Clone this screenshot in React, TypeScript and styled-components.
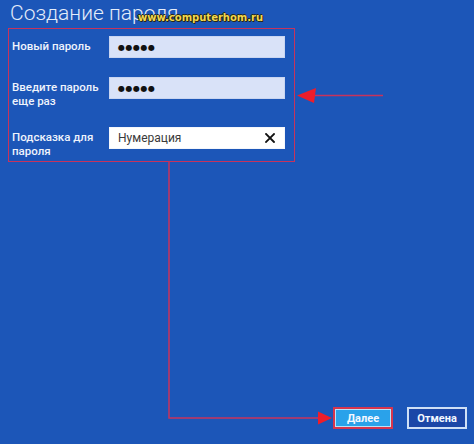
import React from 'react'
import styled, { createGlobalStyle } from 'styled-components'

const GlobalStyle = createGlobalStyle`
  html, body {
    margin: 0;
    padding: 0;
    background: #1c56b8;
  }
  * {
    box-sizing: border-box;
  }
`

const Page = styled.div`
  position: relative;
  width: 474px;
  height: 444px;
  display: flex;
  flex-direction: column;
  background: #1c56b8;
  font-family: Roboto, 'Noto Sans', sans-serif;
  overflow: hidden;
`

const Header = styled.div`
  position: relative;
  height: 28px;
  padding: 1px 0 0 10px;
`

const Title = styled.h1`
  margin: 0;
  font-size: 21px;
  line-height: 24px;
  font-weight: 300;
  color: #e4ecfa;
`

// watermark stamped over the screenshot
const Watermark = styled.span`
  position: absolute;
  left: 138px;
  top: 12px;
  font-family: 'DejaVu Sans', sans-serif;
  font-weight: 700;
  font-size: 10px;
  line-height: 12px;
  color: #f3d84c;
  text-shadow: 0 0 1px #1a1a10, 1px 1px 0 #2a2a18, -1px 0 0 #2a2a18, 0 -1px 0 #2a2a18;
`

const FormBox = styled.div`
  margin-left: 8px;
  width: 287px;
  height: 134px;
  border: 1.5px solid #c7335c;
  padding: 7px 9px 0 3px;
  display: grid;
  grid-template-columns: 97px 1fr;
  row-gap: 19px;
  align-content: start;
`

const Label = styled.label`
  padding-top: 4px;
  font-size: 11.5px;
  line-height: 13.5px;
  font-weight: 500;
  color: #eef3fc;
`

const Field = styled.div<{ $light?: boolean }>`
  height: 22px;
  display: flex;
  align-items: center;
  justify-content: space-between;
  padding: 0 8px;
  background: ${({ $light }) => ($light ? '#ffffff' : '#d9e2f8')};
  border: 1px solid ${({ $light }) => ($light ? '#f4f6fb' : '#c9d5f1')};
`

const Dots = styled.span`
  font-family: 'DejaVu Sans', sans-serif;
  font-size: 8px;
  letter-spacing: 0.5px;
  color: #111;
`

const HintText = styled.span`
  font-size: 12px;
  color: #3a3a3a;
`

const ClearIcon = styled.svg`
  width: 10px;
  height: 10px;
  margin-right: 1px;
`

const Footer = styled.div`
  margin-top: auto;
  display: flex;
  justify-content: flex-end;
  gap: 14px;
  padding: 0 7px 15px 0;
`

const Button = styled.button<{ $primary?: boolean }>`
  width: 60px;
  height: 22px;
  padding: 0;
  font-family: Roboto, 'Noto Sans', sans-serif;
  font-size: 11px;
  font-weight: 700;
  color: #f4f8ff;
  background: ${({ $primary }) => ($primary ? '#2aa2ea' : '#1b47a7')};
  border: 2px solid ${({ $primary }) => ($primary ? '#d7354d' : '#cfe0f6')};
  box-shadow: ${({ $primary }) => ($primary ? 'inset 0 0 0 1px #b8e2fb' : 'none')};
`

const Annotations = styled.svg`
  position: absolute;
  left: 0;
  top: 0;
  width: 474px;
  height: 444px;
  pointer-events: none;
`

export default function App() {
  return (
    <>
      <GlobalStyle />
      <Page>
        <Header>
          <Title>Создание пароля</Title>
          <Watermark>www.computerhom.ru</Watermark>
        </Header>

        <FormBox>
          <Label>Новый пароль</Label>
          <Field>
            <Dots>●●●●●</Dots>
          </Field>

          <Label>Введите пароль<br />еще раз</Label>
          <Field>
            <Dots>●●●●●</Dots>
          </Field>

          <Label>Подсказка для<br />пароля</Label>
          <Field $light>
            <HintText>Нумерация</HintText>
            <ClearIcon viewBox="0 0 10 10">
              <path d="M1 1 L9 9 M9 1 L1 9" stroke="#111" strokeWidth="1.8" strokeLinecap="square" />
            </ClearIcon>
          </Field>
        </FormBox>

        <Footer>
          <Button $primary>Далее</Button>
          <Button>Отмена</Button>
        </Footer>

        <Annotations viewBox="0 0 474 444">
          {/* arrow pointing at the form */}
          <line x1="312" y1="95.5" x2="383" y2="95.5" stroke="#c7335c" strokeWidth="1.5" />
          <polygon points="297,95.5 316,88 314,103" fill="#ee1d2a" />
          {/* connector down to the next button */}
          <polyline points="169,162 169,418 320,418" fill="none" stroke="#c7335c" strokeWidth="1.5" />
          <polygon points="332,418 318,411.5 318,424.5" fill="#ee1d2a" />
        </Annotations>
      </Page>
    </>
  )
}
